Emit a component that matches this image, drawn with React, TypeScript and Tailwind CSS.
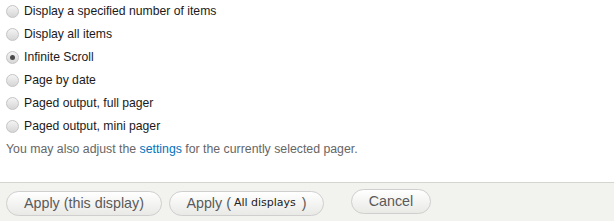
import React from 'react';

const options = [
  { label: 'Display a specified number of items', checked: false },
  { label: 'Display all items', checked: false },
  { label: 'Infinite Scroll', checked: true },
  { label: 'Page by date', checked: false },
  { label: 'Paged output, full pager', checked: false },
  { label: 'Paged output, mini pager', checked: false },
];

const Radio: React.FC<{ checked: boolean }> = ({ checked }) => (
  <span className="flex h-[13px] w-[13px] flex-shrink-0 items-center justify-center rounded-full border border-[#c4c4c4] bg-gradient-to-b from-[#f4f4f4] to-[#d6d6d6]">
    {checked && <span className="h-[5px] w-[5px] rounded-full bg-[#4a4a4a]" />}
  </span>
);

const PillButton: React.FC<{ className?: string; children: React.ReactNode }> = ({
  className = '',
  children,
}) => (
  <button
    className={`flex h-[25px] items-center justify-center rounded-full border border-[#cfcfcf] bg-gradient-to-b from-[#ffffff] to-[#e9e9e6] text-[14.3px] text-[#5a5a5a] ${className}`}
  >
    {children}
  </button>
);

export default function App() {
  return (
    <div className="flex h-[221px] w-[614px] flex-col bg-white font-['Liberation_Sans',Arial,sans-serif]">
      <div className="flex flex-col pl-[6px]">
        {options.map((o) => (
          <label key={o.label} className="flex h-[23px] items-center gap-[5px] text-[12.2px] text-[#1a1a1a]">
            <Radio checked={o.checked} />
            <span>{o.label}</span>
          </label>
        ))}
        <p className="h-[23px] text-[12.3px] leading-[23px] text-[#666666]">
          You may also adjust the <a className="text-[#0074bd]">settings</a> for the currently selected pager.
        </p>
      </div>
      <div className="mt-[21px] flex flex-1 items-start border-t border-[#d4d4d0] bg-[#f2f2ee] pl-[6px] pt-[8px]">
        <PillButton className="w-[156px]">Apply (this display)</PillButton>
        <PillButton className="ml-[7px] w-[155px]">
          Apply (
          <span className="pl-[3px] pr-[6px] font-['DejaVu_Sans',sans-serif] text-[11px] text-[#222]">All displays</span>
          )
        </PillButton>
        <PillButton className="ml-[27px] -mt-[2px] w-[80px]">Cancel</PillButton>
      </div>
    </div>
  );
}
